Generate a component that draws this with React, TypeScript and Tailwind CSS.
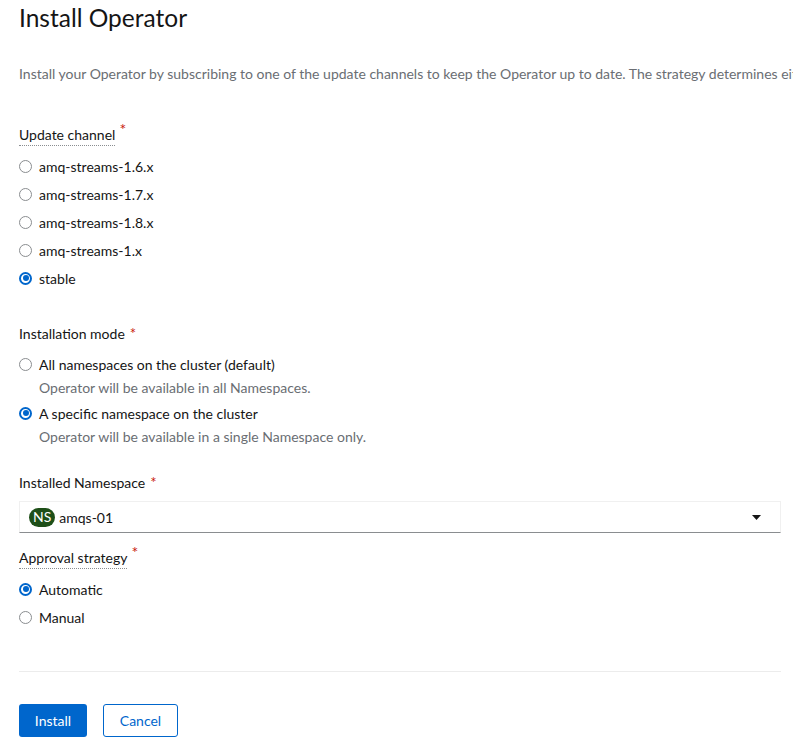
import React from "react";

const Radio = ({ checked }: { checked?: boolean }) =>
  checked ? (
    <span className="inline-flex h-[13px] w-[13px] shrink-0 items-center justify-center rounded-full border-[2px] border-[#0066cc] bg-white">
      <span className="h-[6px] w-[6px] rounded-full bg-[#0066cc]" />
    </span>
  ) : (
    <span className="inline-block h-[13px] w-[13px] shrink-0 rounded-full border border-[#8a8d90] bg-white" />
  );

const RadioRow = ({ label, checked, h = "h-[28px]" }: { label: string; checked?: boolean; h?: string }) => (
  <div className={`flex ${h} items-center gap-[7px]`}>
    <Radio checked={checked} />
    <span className="text-[14px] text-[#151515]">{label}</span>
  </div>
);

export default function App() {
  return (
    <div
      className="w-[793px] h-[754px] overflow-hidden bg-white pl-[19px] pr-[12px] text-[#151515]"
      style={{ fontFamily: 'Lato, "Noto Sans", sans-serif' }}
    >
      <div className="flex h-[36px] items-center text-[24.5px] font-normal text-[#151515]">Install Operator</div>
      <div className="mt-[27px] flex h-[20px] items-center whitespace-nowrap text-[14px] text-[#6a6e73]">
        Install your Operator by subscribing to one of the update channels to keep the Operator up to date. The strategy determines either manual or automatic updates.
      </div>

      <div className="mt-[41px] flex h-[22px]">
        <span className="border-b border-dotted border-[#8a8d90] text-[14px] leading-[21px]">Update channel</span>
        <span className="ml-[4px] -mt-[5px] text-[16px] leading-[20px] text-[#c9190b]">*</span>
      </div>
      <div className="mt-[6px]">
        <RadioRow label="amq-streams-1.6.x" />
        <RadioRow label="amq-streams-1.7.x" />
        <RadioRow label="amq-streams-1.8.x" />
        <RadioRow label="amq-streams-1.x" />
        <RadioRow label="stable" checked />
      </div>

      <div className="mt-[31px] flex h-[21px] items-center text-[14px]">
        Installation mode <span className="ml-[5px] text-[15px] text-[#c9190b]">*</span>
      </div>
      <div className="mt-[8px]">
        <RadioRow label="All namespaces on the cluster (default)" h="h-[24px]" />
        <div className="flex h-[22px] items-center pl-[20px] text-[14px] text-[#6a6e73]">
          Operator will be available in all Namespaces.
        </div>
        <div className="mt-[3px]">
          <RadioRow label="A specific namespace on the cluster" checked h="h-[24px]" />
        </div>
        <div className="flex h-[22px] items-center pl-[20px] text-[14px] text-[#6a6e73]">
          Operator will be available in a single Namespace only.
        </div>
      </div>

      <div className="mt-[25px] flex h-[21px] items-center text-[14px]">
        Installed Namespace <span className="ml-[5px] text-[15px] text-[#c9190b]">*</span>
      </div>
      <div className="mt-[8px] flex h-[32px] w-[762px] items-center border border-[#f0f0f0] border-b-[#8a8d90] pl-[9px] pr-[19px]">
        <span className="flex h-[19px] items-center rounded-full bg-[#1e4f18] px-[4px] text-[14px] leading-none text-white">NS</span>
        <span className="ml-[4px] text-[14px] text-[#151515]">amqs-01</span>
        <span className="ml-auto flex">
          <svg width="9" height="5" viewBox="0 0 9 5">
            <path d="M0 0 H9 L4.5 5 Z" fill="#151515" />
          </svg>
        </span>
      </div>

      <div className="mt-[14px] flex h-[22px]">
        <span className="border-b border-dotted border-[#8a8d90] text-[14px] leading-[21px]">Approval strategy</span>
        <span className="ml-[4px] -mt-[5px] text-[16px] leading-[20px] text-[#c9190b]">*</span>
      </div>
      <div className="mt-[6px]">
        <RadioRow label="Automatic" checked />
        <RadioRow label="Manual" />
      </div>

      <div className="mt-[40px] h-px w-[762px] bg-[#ececec]" />

      <div className="mt-[32px] flex gap-[16px]">
        <button className="h-[33px] w-[68px] rounded-[3px] bg-[#0066cc] text-[14px] text-white">Install</button>
        <button className="h-[33px] w-[75px] rounded-[3px] border border-[#0066cc] bg-white text-[14px] text-[#0066cc]">Cancel</button>
      </div>
    </div>
  );
}
